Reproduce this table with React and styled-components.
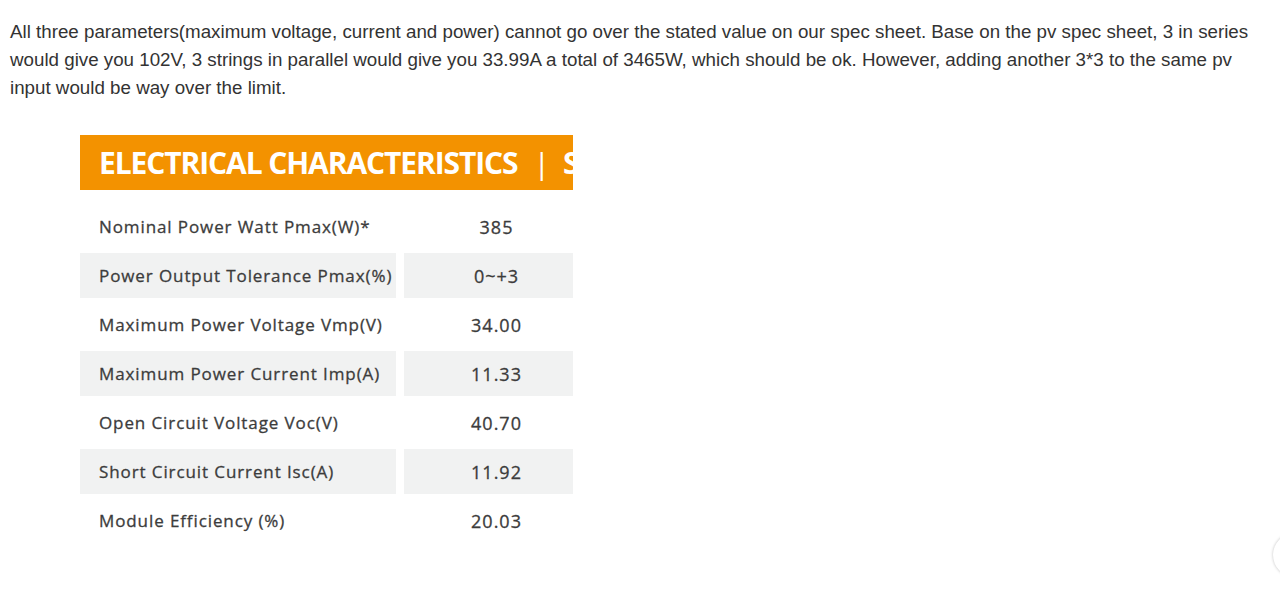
import React from "react";
import styled, { createGlobalStyle } from "styled-components";

const GlobalStyle = createGlobalStyle`
  html, body {
    margin: 0;
    padding: 0;
    background: #fff;
  }
  body {
    font-family: "Liberation Sans", Arial, sans-serif;
    overflow: hidden;
  }
`;

const Page = styled.div`
  position: relative;
  width: 1280px;
  height: 589px;
  overflow: hidden;
`;

const Text = styled.p`
  margin: 0;
  padding: 18px 20px 0 10px;
  font-size: 18.75px;
  line-height: 28px;
  color: #333;
`;

const SpecSheet = styled.div`
  width: 493px;
  margin: 33px 0 0 80px;
  font-family: "Open Sans", "Noto Sans", sans-serif;
`;

const SheetHeader = styled.div`
  height: 55px;
  background: #f39200;
  display: flex;
  align-items: center;
  padding-left: 19px;
  overflow: hidden;
  white-space: nowrap;
  color: #fff;
  font-size: 30px;
  font-weight: 700;
  letter-spacing: -1.1px;
`;

const Bar = styled.span`
  margin: 0 14px 0 16px;
  font-weight: 400;
`;

const Rows = styled.div`
  display: grid;
  grid-template-columns: 316px 169px;
  column-gap: 8px;
  row-gap: 4px;
  margin-top: 14px;
`;

const Cell = styled.div`
  height: 45px;
  display: flex;
  align-items: center;
  background: ${(p) => (p.$shaded ? "#f1f2f2" : "transparent")};
  color: #3c3c3c;
  -webkit-text-stroke: 0.3px #3c3c3c;
`;

const Label = styled(Cell)`
  padding-left: 19px;
  font-size: 17px;
  letter-spacing: 0.9px;
`;

const Value = styled(Cell)`
  justify-content: center;
  padding-left: 16px;
  font-size: 18px;
  letter-spacing: 1px;
`;

const ScrollButton = styled.div`
  position: absolute;
  left: 1273px;
  top: 533px;
  width: 44px;
  height: 44px;
  border-radius: 50%;
  background: #fff;
  box-shadow: 0 0 3px rgba(0, 0, 0, 0.25);
`;

const specs = [
  ["Nominal Power Watt Pmax(W)*", "385"],
  ["Power Output Tolerance Pmax(%)", "0~+3"],
  ["Maximum Power Voltage Vmp(V)", "34.00"],
  ["Maximum Power Current Imp(A)", "11.33"],
  ["Open Circuit Voltage Voc(V)", "40.70"],
  ["Short Circuit Current Isc(A)", "11.92"],
  ["Module Efficiency (%)", "20.03"],
];

export default function App() {
  return (
    <Page>
      <GlobalStyle />
      <Text>
        All three parameters(maximum voltage, current and power) cannot go over
        the stated value on our spec sheet. Base on the pv spec sheet, 3 in
        series would give you 102V, 3 strings in parallel would give you 33.99A a
        total of 3465W, which should be ok. However, adding another 3*3 to the
        same pv input would be way over the limit.
      </Text>
      <SpecSheet>
        <SheetHeader>
          ELECTRICAL CHARACTERISTICS<Bar>|</Bar>S
        </SheetHeader>
        <Rows>
          {specs.map(([label, value], i) => (
            <React.Fragment key={label}>
              <Label $shaded={i % 2 === 1}>{label}</Label>
              <Value $shaded={i % 2 === 1}>{value}</Value>
            </React.Fragment>
          ))}
        </Rows>
      </SpecSheet>
      <ScrollButton />
    </Page>
  );
}
